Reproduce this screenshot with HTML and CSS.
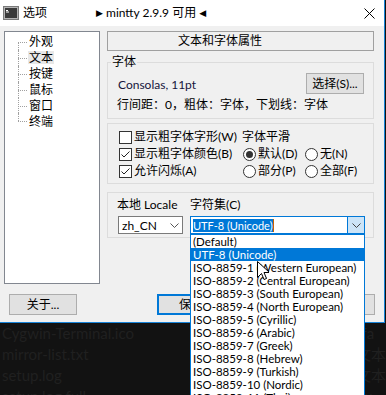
FILE: index.html
```html
<!DOCTYPE html>
<html>
<head>
<meta charset="utf-8">
<title>选项</title>
<link rel="stylesheet" href="styles.css">
</head>
<body>

<div class="window">
  <div class="titlebar">
    <svg class="app-icon" viewBox="0 0 16 14">
      <rect x="0.5" y="0.5" width="15" height="13" fill="#b4b4b4" stroke="#7a7a7a"/>
      <rect x="2" y="2" width="12" height="10" fill="#3a3a3a"/>
      <path d="M3 4.5h2M3 6h3" stroke="#fff"/>
    </svg>
    <span class="title-name">选项</span>
    <span class="title-msg"><span class="tri">▶</span> mintty 2.9.9 可用 <span class="tri">◀</span></span>
    <svg class="close" viewBox="0 0 11 11">
      <path d="M0.5 0.5L10.5 10.5M10.5 0.5L0.5 10.5" stroke="#000" stroke-width="1"/>
    </svg>
  </div>

  <div class="dialog">
    <div class="main">
      <div class="tree">
        <ul>
          <li><span>外观</span></li>
          <li class="sel"><span>文本</span></li>
          <li><span>按键</span></li>
          <li><span>鼠标</span></li>
          <li><span>窗口</span></li>
          <li><span>终端</span></li>
        </ul>
      </div>

      <div class="panel">
        <div class="panel-title">文本和字体属性</div>

        <div class="group group-font">
          <div class="legend">字体</div>
          <div class="font-row">
            <span class="font-name">Consolas, 11pt</span>
            <span class="btn btn-choose">选择(S)...</span>
          </div>
          <div class="font-info">行间距：0，粗体：字体，下划线：字体</div>
        </div>

        <div class="group group-opts">
          <div class="check"><span class="box"></span>显示粗字体字形(W)</div>
          <div class="smooth-title">字体平滑</div>
          <div class="check"><span class="box"><svg viewBox="0 0 11 11"><path d="M1.5 5.5L4 8L9.5 2.5" fill="none" stroke="#222" stroke-width="1"/></svg></span>显示粗字体颜色(B)</div>
          <div class="radios">
            <div class="radio"><span class="dot on"></span>默认(D)</div>
            <div class="radio"><span class="dot"></span>无(N)</div>
          </div>
          <div class="check"><span class="box"><svg viewBox="0 0 11 11"><path d="M1.5 5.5L4 8L9.5 2.5" fill="none" stroke="#222" stroke-width="1"/></svg></span>允许闪烁(A)</div>
          <div class="radios">
            <div class="radio"><span class="dot"></span>部分(P)</div>
            <div class="radio"><span class="dot"></span>全部(F)</div>
          </div>
        </div>

        <div class="group group-locale">
          <div class="lbl">本地 Locale</div>
          <div class="lbl">字符集(C)</div>
          <div class="combo combo-locale">
            <span class="combo-text">zh_CN</span>
            <svg class="chev" viewBox="0 0 9 5"><path d="M0.5 0.5L4.5 4.5L8.5 0.5" fill="none" stroke="#555"/></svg>
          </div>
          <div class="combo combo-charset">
            <span class="combo-text"><span class="hl">UTF-8 (Unicode)</span><span class="caret"></span></span>
            <span class="drop-btn"><svg class="chev" viewBox="0 0 9 5"><path d="M0.5 0.5L4.5 4.5L8.5 0.5" fill="none" stroke="#444"/></svg></span>
          </div>
        </div>
      </div>
    </div>

    <div class="buttons">
      <span class="btn btn-about">关于...</span>
      <span class="btn btn-default">保存</span>
      <span class="btn">取消</span>
      <span class="btn">应用</span>
    </div>
  </div>
</div>

<div class="desktop">
  <div class="files">
    <div>Cygwin-Terminal.ico</div>
    <div>mirror-list.txt</div>
    <div>setup.log</div>
    <div>setup.log.full</div>
  </div>
  <div class="side">
    <div>rfa</div>
    <div>文本</div>
    <div>文本</div>
    <div>uu</div>
  </div>
</div>

<!-- 下拉列表，盖在对话框上 -->
<ul class="dropdown">
  <li>(Default)</li>
  <li class="cur">UTF-8 (Unicode)</li>
  <li>ISO-8859-1 (Western European)</li>
  <li>ISO-8859-2 (Central European)</li>
  <li>ISO-8859-3 (South European)</li>
  <li>ISO-8859-4 (North European)</li>
  <li>ISO-8859-5 (Cyrillic)</li>
  <li>ISO-8859-6 (Arabic)</li>
  <li>ISO-8859-7 (Greek)</li>
  <li>ISO-8859-8 (Hebrew)</li>
  <li>ISO-8859-9 (Turkish)</li>
  <li>ISO-8859-10 (Nordic)</li>
  <li>ISO-8859-11 (Thai)</li>
</ul>

<!-- 鼠标指针 -->
<svg class="cursor" viewBox="0 0 12 19">
  <path d="M0.5 0.5V16.5L4.5 12.5L7 18.5L9.5 17.5L7 11.5H12.5Z" fill="#fff" stroke="#000" stroke-width="1" stroke-linejoin="miter"/>
</svg>

</body>
</html>
```

FILE: styles.css
```css
body {
    margin: 0;
    width: 386px;
    height: 395px;
    overflow: hidden;
    position: relative;
    background-color: #121212;
    font-family: Lato, "Noto Sans CJK SC", sans-serif;
    font-size: 12px;
    color: #000;
}

.window {
    width: 385px;
    height: 323px;
    box-sizing: border-box;
    border-right: 1px solid #1883d7;
    border-bottom: 1px solid #1883d7;
    background-color: #f0f0f0;
    display: flex;
    flex-direction: column;
}

/* title bar */
.titlebar {
    height: 26px;
    flex: none;
    background-color: #fff;
    display: flex;
    align-items: center;
}
.app-icon {
    width: 16px;
    height: 14px;
    margin-left: 3px;
}
.title-name {
    margin-left: 4px;
    line-height: 14px;
}
.title-msg {
    margin-left: 49px;
    line-height: 14px;
}
.tri {
    font-family: "DejaVu Sans", sans-serif;
    font-size: 9px;
    vertical-align: 1px;
}
.close {
    width: 11px;
    height: 11px;
    margin-left: auto;
    margin-right: 9px;
}

/* dialog body */
.dialog {
    flex: 1;
    padding: 5px 0 0 4px;
    display: flex;
    flex-direction: column;
}
.main {
    display: flex;
}

.tree {
    width: 96px;
    height: 253px;
    box-sizing: border-box;
    border: 1px solid #828790;
    background-color: #fff;
}
.tree ul {
    list-style: none;
    margin: 0;
    padding: 2px 0 0 23px;
}
.tree li {
    position: relative;
    height: 15.9px;
    display: flex;
    align-items: center;
}
.tree li span {
    display: inline-block;
    line-height: 13px;
    padding: 0 1px;
}
.tree li.sel span {
    background-color: #e8e8e8;
}
.tree li::before {
    content: "";
    position: absolute;
    left: -10px;
    top: 50%;
    width: 9px;
    border-top: 1px dotted #a0a0a0;
}
.tree li::after {
    content: "";
    position: absolute;
    left: -10px;
    top: 0;
    height: 100%;
    border-left: 1px dotted #a0a0a0;
}
.tree li:first-child::after {
    top: 50%;
    height: 50%;
}
.tree li:last-child::after {
    height: 50%;
}

.panel {
    margin-left: 7px;
    width: 267px;
}
.panel-title {
    height: 20px;
    box-sizing: border-box;
    border: 1px solid #a0a0a0;
    padding-left: 70px;
    line-height: 18px;
}

.group {
    box-sizing: border-box;
    border: 1px solid #dcdcdc;
}

.group-font {
    margin-top: 11px;
    height: 57px;
}
.legend {
    width: fit-content;
    margin: -8px 0 0 3px;
    padding: 0 1px;
    line-height: 14px;
    background-color: #f0f0f0;
}
.font-row {
    margin-top: 4px;
    padding: 0 9px 0 10px;
    display: flex;
    align-items: center;
    justify-content: space-between;
}
.font-name {
    color: #14143c;
    padding-top: 3px;
    line-height: 14px;
}
.font-info {
    margin-top: 4px;
    padding-left: 9px;
    line-height: 14px;
}

.btn {
    display: inline-flex;
    align-items: center;
    justify-content: center;
    width: 68px;
    height: 21px;
    box-sizing: border-box;
    border: 1px solid #adadad;
    background-color: #e1e1e1;
    line-height: 14px;
}
.btn-choose {
    width: 58px;
}

.group-opts {
    margin-top: 4px;
    height: 61px;
    padding: 5px 0 0 11px;
    display: grid;
    grid-template-columns: 123px auto;
    grid-template-rows: 16px 16px 16px;
    row-gap: 1px;
}
.check, .radio {
    display: flex;
    align-items: center;
    gap: 2px;
    line-height: 14px;
}
.smooth-title {
    display: flex;
    align-items: center;
    line-height: 14px;
}
.box {
    width: 13px;
    height: 13px;
    box-sizing: border-box;
    border: 1px solid #333;
    background-color: #fff;
    display: flex;
}
.box svg {
    width: 11px;
    height: 11px;
}
.radios {
    display: grid;
    grid-template-columns: 62px auto;
    padding-left: 1px;
}
.dot {
    width: 13px;
    height: 13px;
    box-sizing: border-box;
    border: 1px solid #333;
    border-radius: 50%;
    background-color: #fff;
    display: flex;
    align-items: center;
    justify-content: center;
}
.dot.on::after {
    content: "";
    width: 7px;
    height: 7px;
    border-radius: 50%;
    background-color: #333;
}

.group-locale {
    margin-top: 8px;
    height: 46px;
    padding: 5px 0 0 9px;
    display: grid;
    grid-template-columns: 73px 175px;
    grid-template-rows: 14px 18px;
    row-gap: 4px;
}
.lbl {
    line-height: 14px;
}
.combo {
    height: 18px;
    box-sizing: border-box;
    background-color: #fff;
    display: flex;
    align-items: center;
}
.combo-locale {
    width: 65px;
    margin-left: 1px;
    border: 1px solid #7a7a7a;
    padding: 0 3px;
    justify-content: space-between;
}
.combo-charset {
    border: 1px solid #0078d7;
}
.combo-text {
    line-height: 13px;
    display: flex;
    align-items: center;
}
.combo-charset .combo-text {
    padding-left: 2px;
    font-size: 11px;
}
.hl {
    background-color: #0078d7;
    color: #fff;
}
.caret {
    width: 1px;
    height: 13px;
    background-color: #c86400;
}
.chev {
    width: 9px;
    height: 5px;
}
.drop-btn {
    margin-left: auto;
    width: 16px;
    height: 16px;
    border-left: 1px solid #0078d7;
    background-color: #cce4f7;
    display: flex;
    align-items: center;
    justify-content: center;
}

.buttons {
    margin-top: 10px;
    display: flex;
    gap: 7px;
}
.btn-about {
    margin-left: 5px;
    margin-right: 73px;
}
.btn-default {
    border: 2px solid #0078d7;
}

/* desktop behind the dialog */
.desktop {
    display: flex;
    color: #202020;
    font-size: 15px;
    line-height: 21px;
}
.files {
    width: 363px;
    padding-left: 2px;
}
.side {
    white-space: nowrap;
}

.dropdown {
    position: absolute;
    left: 190px;
    top: 234px;
    width: 175px;
    box-sizing: border-box;
    margin: 0;
    padding: 0;
    list-style: none;
    border: 1px solid #0078d7;
    background-color: #fff;
    font-size: 11.5px;
}
.dropdown li {
    height: 13px;
    line-height: 13px;
    padding-left: 2px;
    white-space: nowrap;
}
.dropdown li.cur {
    background-color: #0078d7;
    color: #fff;
}

.cursor {
    position: absolute;
    left: 257px;
    top: 261px;
    width: 12px;
    height: 19px;
}
```
